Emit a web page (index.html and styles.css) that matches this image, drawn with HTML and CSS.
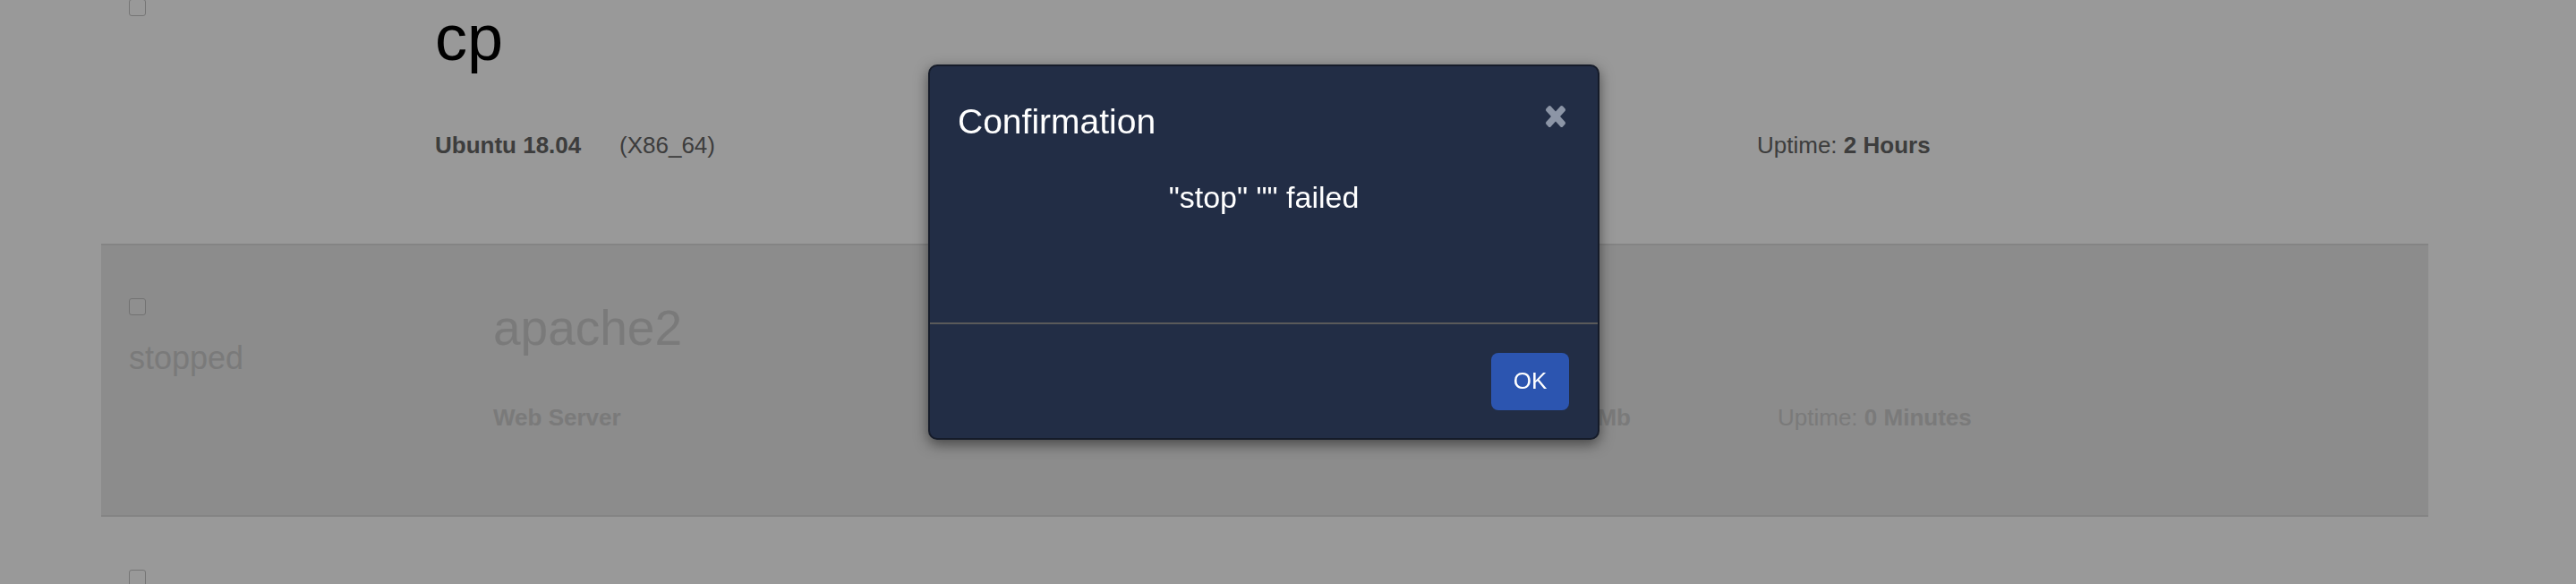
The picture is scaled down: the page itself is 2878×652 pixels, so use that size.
FILE: index.html
```html
<!DOCTYPE html>
<html lang="en">
<head>
<meta charset="utf-8">
<title>Services</title>
<link rel="stylesheet" href="styles.css">
</head>
<body>
<main class="services">
  <div class="row running">
    <div class="status"><input type="checkbox" class="check"></div>
    <div class="main">
      <div class="name">cp</div>
      <div class="info">
        <span class="os">Ubuntu 18.04</span>
        <span class="mid"><span class="arch">(X86_64)</span></span>
        <span class="uptime">Uptime: <b>2 Hours</b></span>
      </div>
    </div>
  </div>
  <div class="row stopped">
    <div class="status"><input type="checkbox" class="check"><div class="state">stopped</div></div>
    <div class="main">
      <div class="name">apache2</div>
      <div class="info">
        <span class="os">Web Server</span>
        <span class="mid"><b class="mem">Mb</b></span>
        <span class="uptime">Uptime: <b>0 Minutes</b></span>
      </div>
    </div>
  </div>
  <div class="row running">
    <div class="status"><input type="checkbox" class="check"></div>
  </div>
</main>
<div class="backdrop"></div>
<div class="modal" role="dialog">
  <div class="modal-header">
    <h4 class="modal-title">Confirmation</h4>
    <button class="close" aria-label="Close">
      <svg viewBox="302 366 1188 1188" width="22" height="24" preserveAspectRatio="none"><path d="M1490 1322q0 40-28 68l-136 136q-28 28-68 28t-68-28l-294-294-294 294q-28 28-68 28t-68-28l-136-136q-28-28-28-68t28-68l294-294-294-294q-28-28-28-68t28-68l136-136q28-28 68-28t68 28l294 294 294-294q28-28 68-28t68 28l136 136q28 28 28 68t-28 68l-294 294 294 294q28 28 28 68z"/></svg>
    </button>
  </div>
  <div class="modal-body"><p>"stop" "" failed</p></div>
  <div class="modal-footer"><button class="btn-ok">OK</button></div>
</div>
</body>
</html>
```
FILE: styles.css
```css
html, body {
  margin: 0;
  padding: 0;
  background: #ffffff;
  overflow: hidden;
  font-family: "Liberation Sans", Arial, sans-serif;
}

.services {
  margin-top: -60px;
}

.row {
  display: flex;
  width: 2600px;
  margin-left: 113px;
  box-sizing: border-box;
  padding: 59px 0 89.5px 31px;
}

.row.stopped {
  background: #e9e9e9;
  border-top: 2px solid #dcdcdc;
  border-bottom: 2px solid #dcdcdc;
  color: #cccccc;
}

.status {
  flex: none;
  width: 342px;
}

.row.stopped .status {
  width: 407px;
}

.check {
  -webkit-appearance: none;
  appearance: none;
  display: block;
  width: 19px;
  height: 19px;
  margin: 0;
  box-sizing: border-box;
  border: 1px solid #c4c4c4;
  border-radius: 3px;
  background: #ffffff;
}

.row.stopped .check {
  background: #efefef;
  border-color: #bebebe;
}

.state {
  margin-top: 26px;
  font-size: 36px;
  line-height: 1.2;
}

.main {
  flex: 1;
}

.name {
  font-size: 72px;
  line-height: 1.2;
  color: #000000;
}

.row.stopped .name {
  font-size: 55px;
  color: #cccccc;
}

.info {
  display: grid;
  grid-template-columns: 206px 1271px auto;
  justify-content: start;
  margin-top: 58px;
  font-size: 26px;
  line-height: 1.5;
  color: #666666;
  white-space: nowrap;
}

.row.stopped .info {
  grid-template-columns: 206px 1065px auto;
  margin-top: 48px;
  color: #cccccc;
}

.os {
  font-weight: bold;
}

.row.stopped .mid {
  text-align: right;
}

.row.stopped .uptime {
  margin-left: 164px;
}

.backdrop {
  position: fixed;
  inset: 0;
  background: rgba(0, 0, 0, 0.4);
}

.modal {
  position: fixed;
  left: 1037px;
  top: 72px;
  width: 750px;
  box-sizing: border-box;
  background: #222d45;
  border: 2px solid #151b29;
  border-radius: 10px;
  box-shadow: 0 5px 15px rgba(0, 0, 0, 0.5);
  color: #ffffff;
}

.modal-header {
  display: flex;
  justify-content: space-between;
  align-items: flex-start;
  padding: 33px 36px 0 31px;
}

.modal-title {
  margin: 0;
  font-size: 39px;
  font-weight: normal;
  line-height: 1.5;
}

.close {
  margin-top: 11px;
  padding: 0;
  border: 0;
  background: none;
  width: 22px;
  height: 24px;
  line-height: 0;
}

.close svg {
  display: block;
  fill: #8c95a6;
}

.modal-body {
  padding: 29px 31px 114px;
}

.modal-body p {
  margin: 0;
  text-align: center;
  font-size: 34px;
  line-height: 1.5;
}

.modal-footer {
  display: flex;
  justify-content: flex-end;
  border-top: 2px solid #5a5a5a;
  padding: 32px 32px 31.5px;
}

.btn-ok {
  width: 87px;
  height: 64px;
  padding: 0;
  border: 0;
  border-radius: 8px;
  background: #2c55b0;
  color: #ffffff;
  font-family: "Liberation Sans", Arial, sans-serif;
  font-size: 26px;
}
```
